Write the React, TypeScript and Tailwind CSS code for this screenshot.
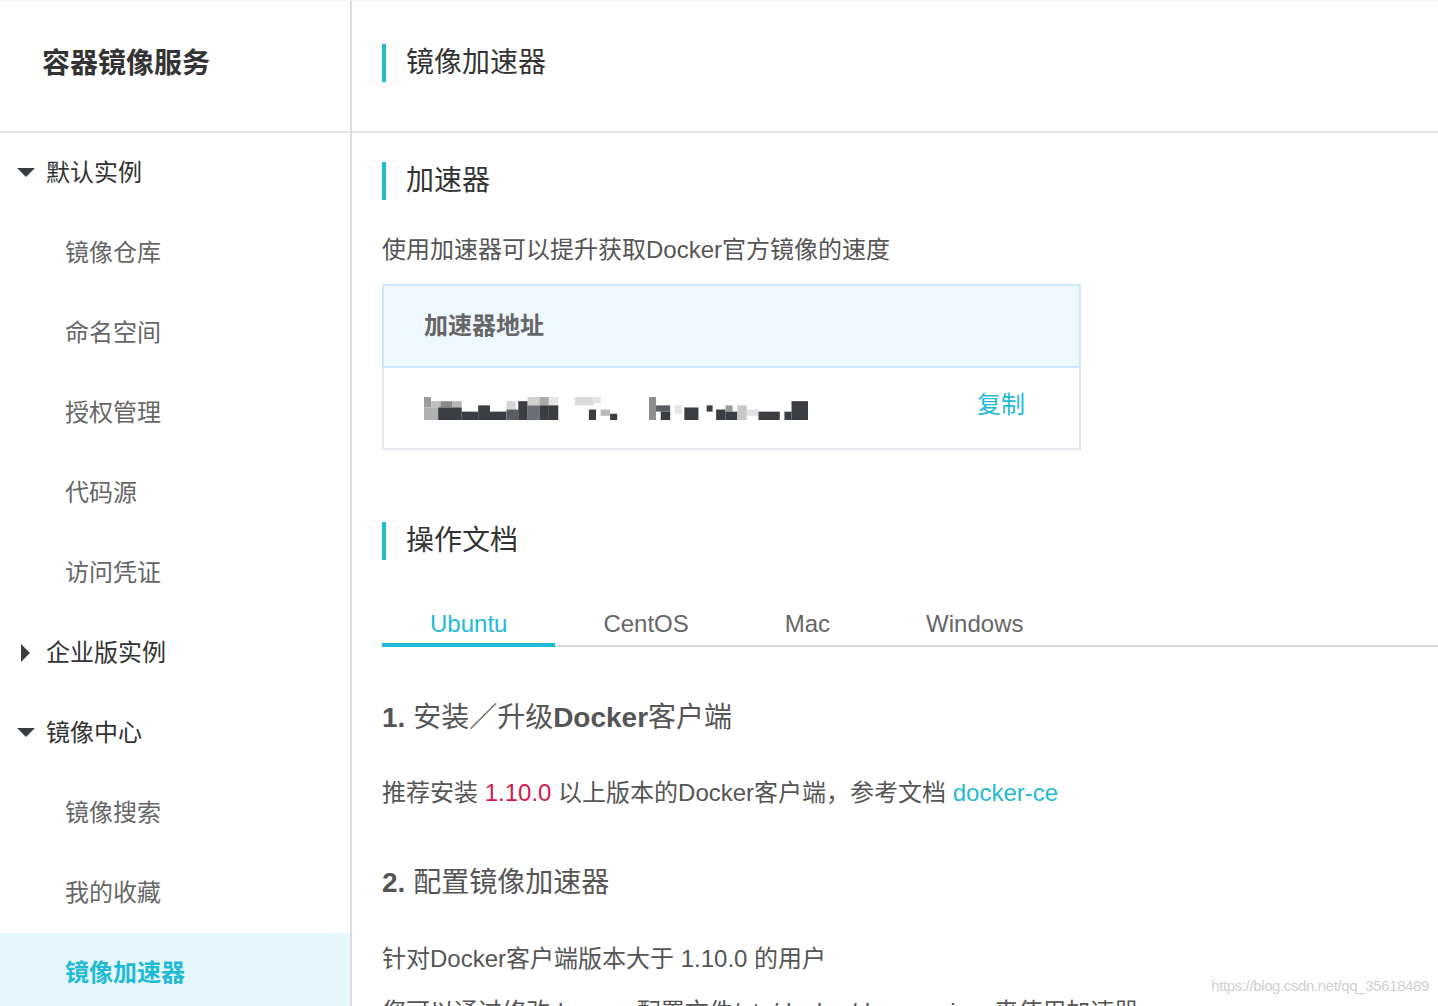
import React from 'react'

const font = "font-['Liberation_Sans','Noto_Sans_CJK_SC',sans-serif]"

type NavItem = { label: string; kind: 'open' | 'closed' | 'sub'; active?: boolean }

const nav: NavItem[] = [
  { label: '默认实例', kind: 'open' },
  { label: '镜像仓库', kind: 'sub' },
  { label: '命名空间', kind: 'sub' },
  { label: '授权管理', kind: 'sub' },
  { label: '代码源', kind: 'sub' },
  { label: '访问凭证', kind: 'sub' },
  { label: '企业版实例', kind: 'closed' },
  { label: '镜像中心', kind: 'open' },
  { label: '镜像搜索', kind: 'sub' },
  { label: '我的收藏', kind: 'sub' },
  { label: '镜像加速器', kind: 'sub', active: true },
]

// pixelated (masked) accelerator address: [x, y, w, h, colour]
const blocks: [number, number, number, number, string][] = [
  [0, 0, 6, 10, '#9a9a9a'],
  [6, 4, 8, 6, '#bdbdbd'],
  [14, 4, 10, 6, '#8a8a8a'],
  [24, 4, 8, 6, '#b5b5b5'],
  [0, 10, 12, 12, '#b0b0b0'],
  [12, 10, 20, 12, '#3a3d41'],
  [32, 14, 14, 8, '#3a3d41'],
  [46, 8, 10, 14, '#3a3d41'],
  [56, 14, 14, 8, '#3a3d41'],
  [70, 4, 8, 8, '#d5d5d5'],
  [70, 12, 10, 10, '#5a5d61'],
  [80, 4, 8, 18, '#3a3d41'],
  [88, 0, 10, 8, '#d0d0d0'],
  [88, 8, 10, 14, '#6c6f73'],
  [98, 0, 8, 8, '#aaaaaa'],
  [98, 8, 8, 14, '#3a3d41'],
  [106, 0, 8, 8, '#e6e6e6'],
  [106, 8, 8, 14, '#3a3d41'],
  [128, 0, 16, 8, '#dcdcdc'],
  [144, 0, 6, 6, '#e4e4e4'],
  [140, 12, 6, 10, '#3a3d41'],
  [150, 12, 8, 6, '#b8b8b8'],
  [158, 16, 6, 6, '#3a3d41'],
  [191, 0, 6, 22, '#8f8f8f'],
  [197, 8, 12, 6, '#5a5d61'],
  [201, 14, 8, 8, '#3a3d41'],
  [213, 8, 6, 8, '#e4e4e4'],
  [221, 10, 12, 12, '#3a3d41'],
  [240, 8, 5, 6, '#3a3d41'],
  [248, 12, 8, 10, '#3a3d41'],
  [256, 8, 6, 6, '#999999'],
  [256, 14, 10, 8, '#3a3d41'],
  [266, 8, 8, 14, '#c8c8c8'],
  [274, 12, 10, 6, '#e2e2e2'],
  [284, 14, 18, 8, '#3a3d41'],
  [306, 14, 6, 8, '#3a3d41'],
  [312, 4, 14, 18, '#3a3d41'],
]

function Triangle({ open }: { open: boolean }) {
  if (open) {
    return (
      <svg width="18" height="10" viewBox="0 0 18 10" className="shrink-0">
        <path d="M0 0 L18 0 L9 9 Z" fill="#3a3d41" />
      </svg>
    )
  }
  return (
    <svg width="10" height="18" viewBox="0 0 10 18" className="shrink-0">
      <path d="M0 0 L9 9 L0 18 Z" fill="#3a3d41" />
    </svg>
  )
}

function SectionTitle({ children }: { children: React.ReactNode }) {
  return (
    <div className="flex items-center gap-5">
      <span className="w-1 h-[38px] bg-[#1fbad6]" />
      <span className="text-[28px] leading-none text-[#333]">{children}</span>
    </div>
  )
}

const tabs = ['Ubuntu', 'CentOS', 'Mac', 'Windows']

export default function App() {
  return (
    <div className={`relative flex h-[1006px] w-full overflow-hidden bg-white border-t border-[#f4f4f4] ${font}`}>
      {/* Sidebar */}
      <aside className="w-[352px] shrink-0 border-r-2 border-[#dcdcdc] flex flex-col">
        <div className="h-[132px] shrink-0 border-b-2 border-[#e3e3e3] flex items-center pl-[42px] pb-[4px]">
          <h1 className="text-[28px] font-bold text-[#333]">容器镜像服务</h1>
        </div>
        <nav className="flex flex-col">
          {nav.map((item) =>
            item.kind === 'sub' ? (
              <div
                key={item.label}
                className={`h-20 flex items-center pl-[65px] text-[24px] ${
                  item.active ? 'bg-[#e5f7fa] text-[#1fbad6] font-bold' : 'text-[#666]'
                }`}
              >
                {item.label}
              </div>
            ) : (
              <div key={item.label} className="h-20 flex items-center text-[24px] text-[#333]">
                <div className="w-[46px] flex justify-center pl-[14px] pr-[8px]">
                  <Triangle open={item.kind === 'open'} />
                </div>
                {item.label}
              </div>
            )
          )}
        </nav>
      </aside>

      {/* Main */}
      <main className="flex-1 min-w-0 flex flex-col">
        <div className="h-[132px] shrink-0 border-b-2 border-[#e6e6e6] flex items-center pl-[30px] pb-[7px]">
          <SectionTitle>镜像加速器</SectionTitle>
        </div>

        <div className="pl-[30px] pt-[29px]">
          <SectionTitle>加速器</SectionTitle>
          <p className="mt-[38px] text-[24px] leading-none text-[#555]">使用加速器可以提升获取Docker官方镜像的速度</p>

          <div className="mt-[22px] w-[699px]">
            <div className="h-[84px] bg-[#eff7ff] border-2 border-[#cfe5fa] flex items-center pl-[40px]">
              <span className="text-[24px] font-bold text-[#666]">加速器地址</span>
            </div>
            <div className="h-[82px] border-2 border-t-0 border-[#e4e9ef] flex items-center justify-between pl-[40px] pr-[54px]">
              <svg width="384" height="23" viewBox="0 0 326 22" preserveAspectRatio="none">
                {blocks.map(([x, y, w, h, c], i) => (
                  <rect key={i} x={x} y={y} width={w} height={h} fill={c} />
                ))}
              </svg>
              <span className="text-[24px] leading-none text-[#1fbad6] -mt-[6px]">复制</span>
            </div>
          </div>

          <div className="mt-[72px]">
            <SectionTitle>操作文档</SectionTitle>
          </div>

          <div className="mt-[49px] flex border-b-2 border-[#dadada]">
            {tabs.map((t, i) => (
              <div
                key={t}
                className={`px-12 pb-[4px] text-[24px] leading-[30px] -mb-[2px] border-b-4 ${
                  i === 0 ? 'text-[#1fbad6] border-[#1fbad6]' : 'text-[#666] border-transparent'
                }`}
              >
                {t}
              </div>
            ))}
          </div>

          <h2 className="mt-[57px] text-[28px] leading-none text-[#555]">
            <span className="font-bold">1.</span> 安装／升级<span className="font-bold">Docker</span>客户端
          </h2>
          <p className="mt-[49px] text-[24px] leading-none text-[#555]">
            推荐安装 <span className="text-[#d4184d]">1.10.0</span> 以上版本的Docker客户端，参考文档{' '}
            <span className="text-[#1fbad6]">docker-ce</span>
          </p>

          <h2 className="mt-[64px] text-[28px] leading-none text-[#555]">
            <span className="font-bold">2.</span> 配置镜像加速器
          </h2>
          <p className="mt-[50px] text-[24px] leading-none text-[#555]">针对Docker客户端版本大于 1.10.0 的用户</p>
          <p className="mt-[29px] text-[24px] leading-none text-[#555]">
            您可以通过修改daemon配置文件/etc/docker/daemon.json来使用加速器
          </p>
        </div>
      </main>

      <div className="absolute right-[9px] bottom-[9px] text-[15px] text-[#cfcfcf] tracking-tight">
        https://blog.csdn.net/qq_35618489
      </div>
    </div>
  )
}
